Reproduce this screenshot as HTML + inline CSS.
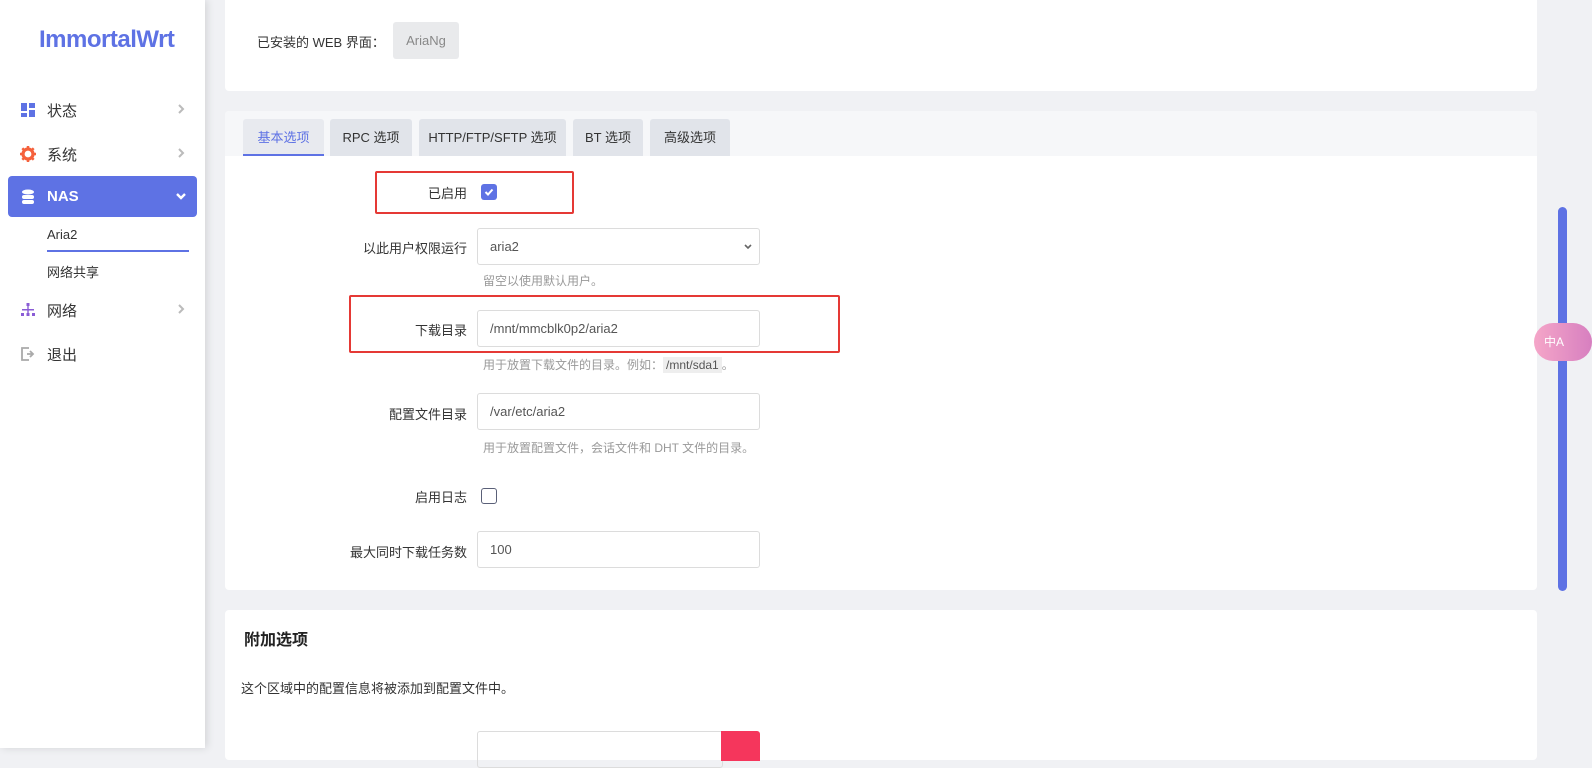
<!DOCTYPE html>
<html><head><meta charset="utf-8"><style>
*{box-sizing:border-box;margin:0;padding:0}
body{width:1592px;height:748px;overflow:hidden;background:#f0f1f4;font-family:"Liberation Sans","Noto Sans CJK SC",sans-serif;font-size:13px;color:#333;position:relative}
.side{position:absolute;left:0;top:0;width:205px;height:748px;background:#fff;box-shadow:2px 0 8px rgba(0,0,0,.12)}
.logo{position:absolute;left:39px;top:26px;font-size:24px;font-weight:bold;color:#5e72e4;letter-spacing:-0.5px}
.mi{position:absolute;left:20px;font-size:15px;color:#333}
.mi .t{position:absolute;left:27px;top:-2px;white-space:nowrap}
.arr{position:absolute;left:176px}
.nas{position:absolute;left:8px;top:176px;width:189px;height:41px;background:#5e72e4;border-radius:4px;color:#fff}
.card{position:absolute;left:225px;width:1312px;background:#fff;border-radius:4px}
.lbl{position:absolute;right:1125px;font-size:13px;color:#333;text-align:right;white-space:nowrap}
.inp{position:absolute;left:477px;width:283px;height:37px;border:1px solid #dcdcdc;border-radius:3px;color:#555;padding:0 12px;line-height:35px;font-size:13px}
.help{position:absolute;left:483px;font-size:12px;color:#999}
.tab{position:absolute;top:119px;height:37px;background:#e1e4ea;line-height:37px;text-align:center;font-size:13px;color:#333;border-radius:3px 3px 0 0;white-space:nowrap}
.red{position:absolute;border:2px solid #e53935;border-radius:2px}
.cb{position:absolute;width:16px;height:16px;border-radius:3px}
</style></head><body>
<div class="side">
<div class="logo">ImmortalWrt</div>
<div class="mi" style="top:102px"><svg width="16" height="16" viewBox="0 0 16 16"><rect x="1" y="1" width="6" height="8" fill="#5e72e4"/><rect x="9" y="1" width="6" height="5" fill="#5e72e4"/><rect x="1" y="11" width="6" height="4" fill="#5e72e4"/><rect x="9" y="8" width="6" height="7" fill="#5e72e4"/></svg><span class="t">状态</span></div>
<svg class="arr" style="top:103px" width="10" height="12" viewBox="0 0 10 12"><path d="M3 2l4 4-4 4" fill="none" stroke="#bbb" stroke-width="2"/></svg>
<div class="mi" style="top:146px"><svg width="16" height="16" viewBox="0 0 16 16"><circle cx="8" cy="8" r="5" fill="none" stroke="#f5613c" stroke-width="3.2"/><g stroke="#f5613c" stroke-width="2.5"><path d="M8 0v3M8 13v3M0 8h3M13 8h3M2.3 2.3l2 2M11.7 11.7l2 2M2.3 13.7l2-2M11.7 4.3l2-2"/></g></svg><span class="t">系统</span></div>
<svg class="arr" style="top:147px" width="10" height="12" viewBox="0 0 10 12"><path d="M3 2l4 4-4 4" fill="none" stroke="#bbb" stroke-width="2"/></svg>
<div class="nas"><svg style="position:absolute;left:13px;top:13px" width="14" height="16" viewBox="0 0 14 16"><ellipse cx="7" cy="3" rx="6" ry="2.5" fill="#fff"/><rect x="1" y="6" width="12" height="4" rx="2" fill="#fff"/><rect x="1" y="11" width="12" height="4" rx="2" fill="#fff"/></svg><span style="position:absolute;left:39px;top:12px;font-size:15px;font-weight:bold">NAS</span><svg style="position:absolute;left:167px;top:15px" width="12" height="10" viewBox="0 0 12 10"><path d="M2 3l4 4 4-4" fill="none" stroke="#fff" stroke-width="2.4"/></svg></div>
<div style="position:absolute;left:47px;top:227px;font-size:13px;color:#333">Aria2</div>
<div style="position:absolute;left:47px;top:250px;width:142px;height:2px;background:#5e72e4"></div>
<div style="position:absolute;left:47px;top:262px;font-size:13px;color:#333">网络共享</div>
<div class="mi" style="top:302px"><svg width="16" height="16" viewBox="0 0 16 16" fill="#8a5cd6"><rect x="6.5" y="1" width="3" height="3"/><rect x="1" y="11" width="3" height="3"/><rect x="6.5" y="11" width="3" height="3"/><rect x="12" y="11" width="3" height="3"/><rect x="2" y="7" width="12" height="1.5"/><rect x="7.3" y="4" width="1.4" height="7"/></svg><span class="t">网络</span></div>
<svg class="arr" style="top:303px" width="10" height="12" viewBox="0 0 10 12"><path d="M3 2l4 4-4 4" fill="none" stroke="#bbb" stroke-width="2"/></svg>
<div class="mi" style="top:346px"><svg width="16" height="16" viewBox="0 0 16 16"><path d="M9 2H2v12h7" fill="none" stroke="#aaa" stroke-width="1.8"/><path d="M7 8h5M10 5l3 3-3 3" fill="none" stroke="#aaa" stroke-width="1.8"/></svg><span class="t">退出</span></div>
</div>

<div class="card" style="top:0;height:91px;border-radius:0 0 4px 4px">
<span style="position:absolute;left:32px;top:32px">已安装的 WEB 界面：</span>
<div style="position:absolute;left:168px;top:22px;width:66px;height:37px;background:#e9eaec;border-radius:3px;color:#888;text-align:center;line-height:37px">AriaNg</div>
</div>

<div class="card" style="top:111px;height:479px">
<div style="position:absolute;left:0;top:0;width:1312px;height:45px;background:#f6f7f9;border-radius:4px 4px 0 0"></div>
</div>
<div class="tab" style="left:243px;width:81px;background:#e8eaef;color:#5e72e4;border-bottom:2px solid #5e72e4">基本选项</div>
<div class="tab" style="left:330px;width:82px">RPC 选项</div>
<div class="tab" style="left:419px;width:147px">HTTP/FTP/SFTP 选项</div>
<div class="tab" style="left:573px;width:70px">BT 选项</div>
<div class="tab" style="left:650px;width:80px">高级选项</div>

<div class="red" style="left:375px;top:171px;width:199px;height:43px"></div>
<div class="lbl" style="top:183px">已启用</div>
<div class="cb" style="left:481px;top:184px;background:#5e72e4"><svg width="16" height="16" viewBox="0 0 16 16"><path d="M4.5 8l2.5 2.5 4.5-5" fill="none" stroke="#fff" stroke-width="2"/></svg></div>

<div class="lbl" style="top:238px">以此用户权限运行</div>
<div class="inp" style="top:228px">aria2<svg style="position:absolute;right:6px;top:14px" width="10" height="8" viewBox="0 0 10 8"><path d="M2 2l3 3 3-3" fill="none" stroke="#666" stroke-width="1.6"/></svg></div>
<div class="help" style="top:272px">留空以使用默认用户。</div>

<div class="red" style="left:349px;top:295px;width:491px;height:58px"></div>
<div class="lbl" style="top:320px">下载目录</div>
<div class="inp" style="top:310px">/mnt/mmcblk0p2/aria2</div>
<div class="help" style="top:356px">用于放置下载文件的目录。例如：<span style="background:#eee;color:#555;padding:1px 3px">/mnt/sda1</span>。</div>

<div class="lbl" style="top:404px">配置文件目录</div>
<div class="inp" style="top:393px">/var/etc/aria2</div>
<div class="help" style="top:439px">用于放置配置文件，会话文件和 DHT 文件的目录。</div>

<div class="lbl" style="top:487px">启用日志</div>
<div class="cb" style="left:481px;top:488px;border:1.5px solid #5a6078"></div>

<div class="lbl" style="top:542px">最大同时下载任务数</div>
<div class="inp" style="top:531px">100</div>

<div class="card" style="top:610px;height:150px">
<div style="position:absolute;left:19px;top:16px;font-size:16px;font-weight:bold;color:#222">附加选项</div>
<div style="position:absolute;left:16px;top:68px;font-size:13px">这个区域中的配置信息将被添加到配置文件中。</div>
</div>
<div class="inp" style="top:731px;width:246px"></div>
<div style="position:absolute;left:721px;top:731px;width:39px;height:30px;background:#f5365c;border-radius:0 3px 0 0"></div>

<div style="position:absolute;left:1558px;top:207px;width:9px;height:384px;background:#5e72e4;border-radius:5px"></div>
<div style="position:absolute;left:1534px;top:323px;width:58px;height:38px;background:linear-gradient(90deg,#f5a6c8,#d77fc0);border-radius:19px;color:#fff;font-size:12px;line-height:38px;padding-left:10px">中A</div>
</body></html>
